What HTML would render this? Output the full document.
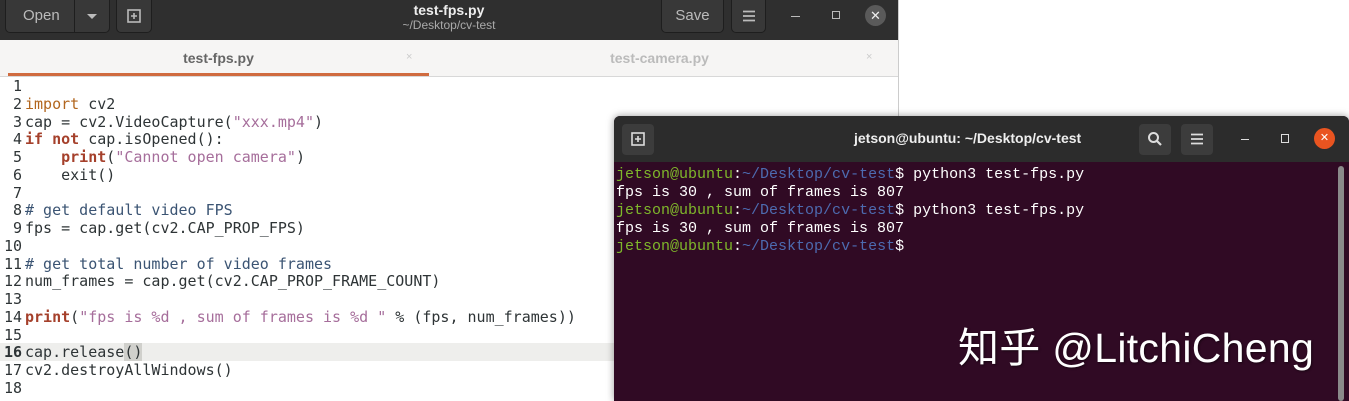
<!DOCTYPE html>
<html><head><meta charset="utf-8"><style>
*{margin:0;padding:0;box-sizing:border-box}
body{width:1349px;height:401px;overflow:hidden;background:#fff;position:relative;font-family:"Liberation Sans","DejaVu Sans",sans-serif}
.gh{position:absolute;left:0;top:0;width:898px;height:40px;background:#2f2f2f}
.btn{position:absolute;top:0;height:33px;border:1px solid #1e1e1e;border-top:none;border-radius:0 0 5px 5px;background:#383838;color:#bbb;font-size:15px;text-align:center;line-height:32px}
.tabs{position:absolute;left:0;top:40px;width:898px;height:37px;background:#f6f5f4;border-bottom:1px solid #d8d8d8}
.tab{position:absolute;top:0;height:36px;line-height:36px;font-weight:bold;font-size:14px;text-align:center}
.code{position:absolute;left:0;top:77px;width:898px;height:324px;background:#fff;font-family:"DejaVu Sans Mono",monospace;font-size:15px;line-height:17.75px;color:#2e3436}
.ln{position:absolute;left:0;width:22px;text-align:right;color:#2e3436}
.cl{position:absolute;left:25px;white-space:pre}
.kw{color:#a5402b;font-weight:bold}.imp{color:#b2661e}.st{color:#a66e9b}.cm{color:#3b5473}
.term{position:absolute;left:614px;top:116px;width:735px;height:285px;background:#300a24;box-shadow:0 0 8px rgba(0,0,0,.4);border-radius:6px 6px 0 0;overflow:hidden}
.th{position:absolute;left:0;top:0;width:735px;height:46px;background:#2c2c2c}
.tb{position:absolute;top:8px;width:32px;height:31px;background:#3c3c3c;border-radius:4px;color:#ddd;text-align:center;line-height:31px}
.tt{position:absolute;left:0;top:50px;font-family:"Liberation Mono",monospace;font-size:15px;line-height:18px;color:#fff;white-space:pre;padding-left:2px}
.g{color:#7fb82b}.b{color:#4d6bb0}
</style></head><body>
<div class="gh">
 <div class="btn" style="left:5px;width:105px;text-align:left;padding-left:17px">Open</div>
 <div style="position:absolute;left:74px;top:0;width:1px;height:33px;background:#1e1e1e"></div>
 <div style="position:absolute;left:87px;top:14px;border:5px solid transparent;border-top:5px solid #bbb;border-bottom:none;width:0"></div>
 <div class="btn" style="left:116px;width:36px"><svg width="14" height="14" viewBox="0 0 14 14" style="margin-top:9px"><rect x="1" y="1" width="12" height="12" fill="none" stroke="#bbb" stroke-width="1.6"/><path d="M7 4v6M4 7h6" stroke="#bbb" stroke-width="1.6"/></svg></div>
 <div style="position:absolute;left:0;width:898px;top:2px;text-align:center;color:#eee;font-weight:bold;font-size:14px">test-fps.py</div>
 <div style="position:absolute;left:0;width:898px;top:18px;text-align:center;color:#aaa;font-size:12px">~/Desktop/cv-test</div>
 <div class="btn" style="left:661px;width:63px">Save</div>
 <div class="btn" style="left:731px;width:35px"><svg width="12" height="12" viewBox="0 0 12 12" style="margin-top:10px"><path d="M0 1.5h12M0 6h12M0 10.5h12" stroke="#bbb" stroke-width="1.8"/></svg></div>
 <div style="position:absolute;left:791px;top:16px;width:9px;height:1px;background:#bbb"></div>
 <div style="position:absolute;left:832px;top:11px;width:8px;height:8px;border:1px solid #bbb"></div>
 <div style="position:absolute;left:865px;top:5px;width:21px;height:21px;border-radius:50%;background:#5a5a5a;color:#eee;font-size:13px;text-align:center;line-height:21px">✕</div>
</div>
<div style="position:absolute;left:898px;top:0;width:1px;height:401px;background:#ccc"></div>
<div class="tabs">
 <div class="tab" style="left:8px;width:421px;color:#666">test-fps.py</div>
 <div style="position:absolute;left:406px;top:11px;color:#ccc;font-size:11px">×</div>
 <div style="position:absolute;left:8px;top:33px;width:421px;height:3px;background:#d06b3f"></div>
 <div class="tab" style="left:449px;width:421px;color:#bbb">test-camera.py</div>
 <div style="position:absolute;left:866px;top:11px;color:#ccc;font-size:11px">×</div>
</div>
<div class="code">
 <div style="position:absolute;left:0;top:266px;width:898px;height:18px;background:#eeeeec"></div>
 <div style="position:absolute;left:124px;top:266px;width:18px;height:18px;background:#d0d0cc"></div>
 <div class="ln" style="top:1px">1</div>
 <div class="ln" style="top:18.75px">2</div><div class="cl" style="top:18.75px"><span class="imp">import</span> cv2</div>
 <div class="ln" style="top:36.5px">3</div><div class="cl" style="top:36.5px">cap = cv2.VideoCapture(<span class="st">"xxx.mp4"</span>)</div>
 <div class="ln" style="top:54.25px">4</div><div class="cl" style="top:54.25px"><span class="kw">if not</span> cap.isOpened():</div>
 <div class="ln" style="top:72px">5</div><div class="cl" style="top:72px">    <span class="kw">print</span>(<span class="st">"Cannot open camera"</span>)</div>
 <div class="ln" style="top:89.75px">6</div><div class="cl" style="top:89.75px">    exit()</div>
 <div class="ln" style="top:107.5px">7</div>
 <div class="ln" style="top:125.25px">8</div><div class="cl cm" style="top:125.25px"># get default video FPS</div>
 <div class="ln" style="top:143px">9</div><div class="cl" style="top:143px">fps = cap.get(cv2.CAP_PROP_FPS)</div>
 <div class="ln" style="top:160.75px">10</div>
 <div class="ln" style="top:178.5px">11</div><div class="cl cm" style="top:178.5px"># get total number of video frames</div>
 <div class="ln" style="top:196.25px">12</div><div class="cl" style="top:196.25px">num_frames = cap.get(cv2.CAP_PROP_FRAME_COUNT)</div>
 <div class="ln" style="top:214px">13</div>
 <div class="ln" style="top:231.75px">14</div><div class="cl" style="top:231.75px"><span class="kw">print</span>(<span class="st">"fps is %d , sum of frames is %d "</span> % (fps, num_frames))</div>
 <div class="ln" style="top:249.5px">15</div>
 <div class="ln" style="top:267.25px;font-weight:bold">16</div><div class="cl" style="top:267.25px">cap.release()</div>
 <div class="ln" style="top:285px">17</div><div class="cl" style="top:285px">cv2.destroyAllWindows()</div>
 <div class="ln" style="top:302.75px">18</div>
</div>
<div class="term">
 <div class="th">
  <div class="tb" style="left:8px"><svg width="14" height="14" viewBox="0 0 14 14" style="margin-top:8px"><rect x="1" y="1" width="12" height="12" fill="none" stroke="#ddd" stroke-width="1.6"/><path d="M7 4v6M4 7h6" stroke="#ddd" stroke-width="1.6"/></svg></div>
  <div style="position:absolute;left:240px;top:14px;color:#eee;font-weight:bold;font-size:14px">jetson@ubuntu: ~/Desktop/cv-test</div>
  <div class="tb" style="left:525px"><svg width="16" height="16" viewBox="0 0 16 16" style="margin-top:7px"><circle cx="6.5" cy="6.5" r="4.5" fill="none" stroke="#ddd" stroke-width="2"/><path d="M10 10l4 4" stroke="#ddd" stroke-width="2.2"/></svg></div>
  <div class="tb" style="left:567px"><svg width="12" height="12" viewBox="0 0 12 12" style="margin-top:9px"><path d="M0 1.5h12M0 6h12M0 10.5h12" stroke="#ddd" stroke-width="1.8"/></svg></div>
  <div style="position:absolute;left:627px;top:23px;width:8px;height:1px;background:#ddd"></div>
  <div style="position:absolute;left:667px;top:18px;width:8px;height:9px;border:1px solid #ddd"></div>
  <div style="position:absolute;left:700px;top:12px;width:21px;height:21px;border-radius:50%;background:#e95420;color:#fff;font-size:11px;text-align:center;line-height:21px">✕</div>
 </div>
 <div class="tt"><span class="g">jetson@ubuntu</span>:<span class="b">~/Desktop/cv-test</span>$ python3 test-fps.py
fps is 30 , sum of frames is 807
<span class="g">jetson@ubuntu</span>:<span class="b">~/Desktop/cv-test</span>$ python3 test-fps.py
fps is 30 , sum of frames is 807
<span class="g">jetson@ubuntu</span>:<span class="b">~/Desktop/cv-test</span>$</div>
 <div style="position:absolute;left:724px;top:50px;width:6px;height:235px;background:#8a8a8a;border-radius:3px"></div>
 <div style="position:absolute;left:344px;top:198px;color:#fff;font-size:41px;letter-spacing:0.3px;white-space:nowrap;font-family:'Liberation Sans','Noto Sans CJK SC',sans-serif;text-shadow:1px 1px 2px rgba(0,0,0,.5)">知乎 @LitchiCheng</div>
</div>
</body></html>
